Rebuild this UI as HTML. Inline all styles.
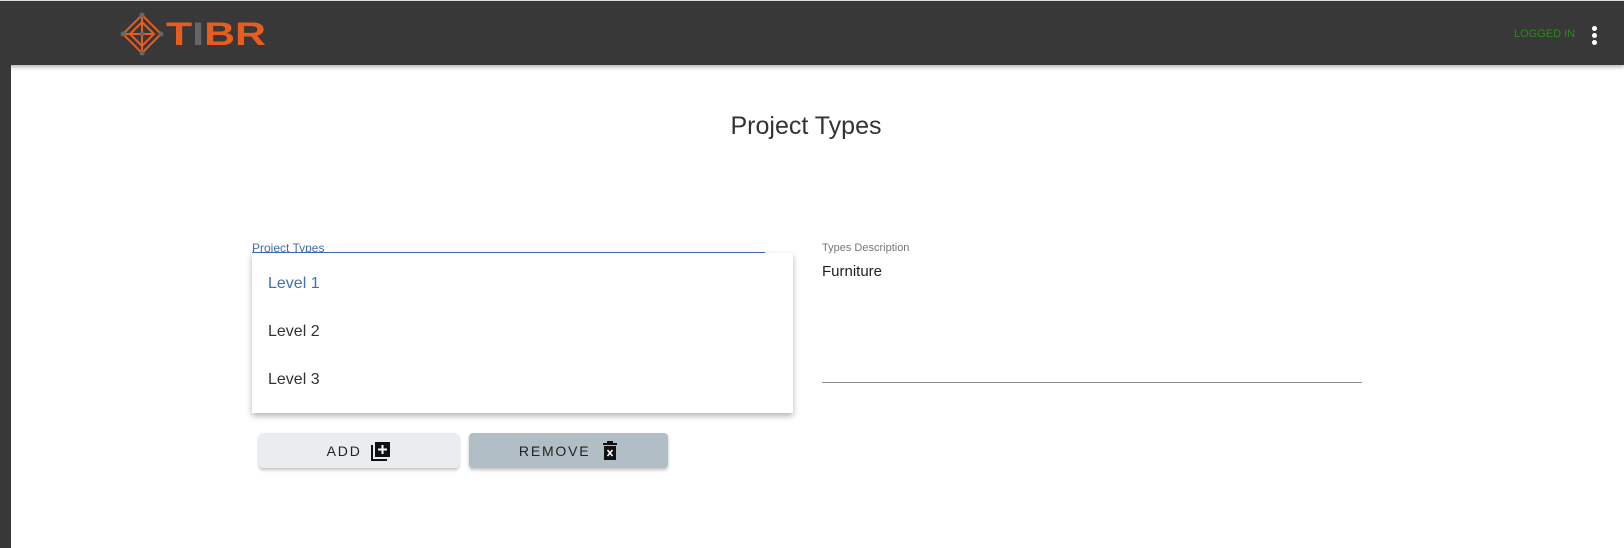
<!DOCTYPE html>
<html><head><style>
body{margin:0;width:1624px;height:548px;background:#fff;font-family:"Liberation Sans",sans-serif;position:relative;overflow:hidden}
.hdr{position:absolute;left:0;top:0;width:1624px;height:65px;background:#383838;box-shadow:0 2px 4px rgba(0,0,0,.3);border-top:1px solid #ddd;box-sizing:border-box}
.strip{position:absolute;left:0;top:65px;width:11px;height:483px;background:#383838}
.abs{position:absolute}
.btn{position:absolute;top:433px;height:35px;border-radius:4px;box-shadow:0 2px 3px rgba(0,0,0,.25);display:flex;align-items:center;justify-content:center;font-size:14px;letter-spacing:1.8px;color:#222}
</style></head><body>
<div class="hdr">
<svg class="abs" style="left:119px;top:10px" width="152" height="46" viewBox="0 0 152 46">
<g stroke="#e85c20" stroke-width="2" fill="none"><path d="M4 23 L23 4 L42 23 L23 42 Z"/><path d="M11 23 L23 11 L35 23 L23 35 Z M4 23 L35 23 M23 4 L23 42 M11 23 L23 35 M23 11 L35 23"/></g>
<g fill="#666"><circle cx="23" cy="4" r="2.5"/><circle cx="4" cy="23" r="2.5"/><circle cx="42" cy="23" r="2.5"/><circle cx="23" cy="42" r="2.5"/><circle cx="23" cy="23" r="2.5"/></g>
<text x="47" y="34" font-family="Liberation Sans" font-weight="bold" font-size="32" fill="#e85c20" textLength="100" lengthAdjust="spacingAndGlyphs">T<tspan fill="#666">I</tspan>BR</text>
</svg>
<div class="abs" style="left:1514px;top:27px;font-size:11px;color:#2a8a1a">LOGGED IN</div>
<div class="abs" style="left:1592px;top:25px;width:5px">
<div style="width:5px;height:5px;border-radius:50%;background:#fff;margin-bottom:2px"></div>
<div style="width:5px;height:5px;border-radius:50%;background:#fff;margin-bottom:2px"></div>
<div style="width:5px;height:5px;border-radius:50%;background:#fff"></div></div>
</div>
<div class="strip"></div>
<div class="abs" style="left:0;width:1612px;top:112px;text-align:center;font-size:25px;color:#333;font-weight:300">Project Types</div>
<div class="abs" style="left:252px;top:241px;font-size:12px;color:#3f6fb5">Project Types</div>
<div class="abs" style="left:252px;top:252px;width:513px;height:1px;background:#3f6fb5"></div>
<div class="abs" style="left:252px;top:253px;width:541px;height:160px;background:#fff;box-shadow:0 3px 6px rgba(0,0,0,.3)">
<div class="abs" style="left:16px;top:22px;font-size:16px;color:#3f6fb5">Level 1</div>
<div class="abs" style="left:16px;top:70px;font-size:16px;color:#333">Level 2</div>
<div class="abs" style="left:16px;top:118px;font-size:16px;color:#333">Level 3</div>
</div>
<div class="abs" style="left:822px;top:242px;font-size:11px;color:#777">Types Description</div>
<div class="abs" style="left:822px;top:263px;font-size:15px;color:#222">Furniture</div>
<div class="abs" style="left:822px;top:382px;width:540px;height:1px;background:#888"></div>
<div class="btn" style="left:259px;width:200px;background:#eaedf0">ADD&nbsp;<svg width="20" height="20" viewBox="0 0 20 20" style="margin-left:4px"><path d="M1 4v15h15" stroke="#111" stroke-width="2" fill="none"/><rect x="4" y="1" width="15" height="15" fill="#111"/><path d="M11.5 4v9M7 8.5h9" stroke="#fff" stroke-width="2"/></svg></div>
<div class="btn" style="left:469px;width:199px;background:#b2bec6">REMOVE&nbsp;<svg width="16" height="20" viewBox="0 0 16 20" style="margin-left:6px"><rect x="1" y="2" width="14" height="2" fill="#111"/><rect x="5" y="0" width="6" height="2" fill="#111"/><rect x="2" y="5" width="12" height="14" fill="#111"/><path d="M5.5 9l5 6M10.5 9l-5 6" stroke="#fff" stroke-width="1.6"/></svg></div>
</body></html>
